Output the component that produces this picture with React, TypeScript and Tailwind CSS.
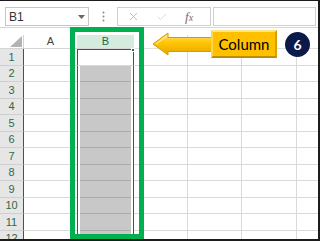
import { Check, X } from "lucide-react";

const rows = [1, 2, 3, 4, 5, 6, 7, 8, 9, 10, 11, 12];

function Row({ n }: { n: number }) {
  return (
    <div className="flex h-[16.5px] shrink-0">
      {/* row number */}
      <div className="w-[24px] shrink-0 bg-[#e6e6e6] border-r border-b border-r-[#1e6b40] border-b-[#cfcfcf] flex items-center justify-center text-[11px] text-[#2d6a47]">
        {n}
      </div>
      <div className="w-[53px] shrink-0 border-b border-[#dadada]" />
      {/* selected column B */}
      <div
        className={
          n === 1
            ? "w-[57px] shrink-0 border-x border-t border-[#1e6b40] border-b-[#dadada] border-b"
            : "w-[57px] shrink-0 border-x border-[#1e6b40] px-[2px]"
        }
      >
        {n !== 1 && <div className="h-full bg-[#c8c8c8] border-b border-[#a9a9a9]" />}
      </div>
      <div className="w-[54px] shrink-0 border-b border-r border-[#dadada]" />
      <div className="w-[54px] shrink-0 border-b border-r border-[#dadada]" />
      <div className="w-[55px] shrink-0 border-b border-r border-[#dadada]" />
      <div className="flex-1 border-b border-[#dadada]" />
    </div>
  );
}

export default function App() {
  return (
    <div className="relative w-[320px] h-[241px] overflow-hidden bg-white border-t border-r-2 border-b-2 border-[#1c1c1c] font-['Liberation_Sans',sans-serif] flex flex-col">
      {/* Formula bar */}
      <div className="flex h-[27px] shrink-0 items-start pt-[6px] border-b border-[#d6d6d6]">
        <div className="ml-[5px] w-[84px] h-[19px] border border-[#c6c6c6] flex items-center justify-between pl-[3px] pr-[3px]">
          <span className="text-[12px] text-[#333]">B1</span>
          <svg width="7" height="4" viewBox="0 0 7 4">
            <path d="M0 0 L7 0 L3.5 4 Z" fill="#666" />
          </svg>
        </div>
        <div className="w-[28px] h-[19px] flex items-center justify-center">
          <svg width="3" height="11" viewBox="0 0 3 11">
            <circle cx="1.5" cy="1.5" r="1" fill="#888" />
            <circle cx="1.5" cy="5.5" r="1" fill="#888" />
            <circle cx="1.5" cy="9.5" r="1" fill="#888" />
          </svg>
        </div>
        <div className="w-[94px] h-[19px] border border-[#d0d0d0] flex items-center">
          <X size={13} strokeWidth={1.3} className="ml-[9px] text-[#a6a6a6]" />
          <Check size={12} strokeWidth={1.3} className="ml-[16px] text-[#c2c2c2]" />
          <span className="ml-[17px] text-[13px] italic text-[#6f6f6f] font-['Liberation_Serif',serif]">
            f<span className="text-[10px]">x</span>
          </span>
        </div>
        <div className="ml-[2px] mr-[2px] flex-1 h-[19px] border border-[#d0d0d0]" />
      </div>

      <div className="h-[7px] shrink-0" />

      {/* Column headers */}
      <div className="flex h-[14px] shrink-0 text-[11px]">
        <div className="w-[24px] shrink-0 border-r border-b border-[#d4d4d4] flex items-end justify-end pr-[1px] pb-[1px]">
          <svg width="12" height="11" viewBox="0 0 12 11">
            <path d="M12 0 L12 11 L0 11 Z" fill="#b3b3b3" />
          </svg>
        </div>
        <div className="w-[53px] shrink-0 border-b border-[#d4d4d4] flex items-center justify-center text-[#444]">A</div>
        <div className="w-[57px] shrink-0 bg-[#d3ecdd] border-b border-[#d4d4d4] flex items-center justify-center text-[#1e6b40]">B</div>
        <div className="w-[54px] shrink-0 border-b border-r border-[#e0e0e0]" />
        <div className="w-[54px] shrink-0 border-b border-r border-[#e0e0e0]" />
        <div className="w-[55px] shrink-0 border-b border-r border-[#e0e0e0]" />
        <div className="flex-1 border-b border-[#e0e0e0]" />
      </div>

      {/* Rows */}
      <div className="flex flex-col">
        {rows.map((n) => (
          <Row key={n} n={n} />
        ))}
      </div>

      {/* fill handle */}
      <div className="absolute left-[131px] top-[47px] w-[4px] h-[4px] bg-[#1e6b40] border border-white" />

      {/* annotation: green frame */}
      <div className="absolute left-[70px] top-[26px] w-[74px] h-[212px] border-[5px] border-[#00b050]" />

      {/* annotation: arrow */}
      <svg className="absolute left-[150px] top-[29px]" width="66" height="28" viewBox="0 0 66 28">
        <defs>
          <linearGradient id="arrowFill" x1="0" y1="0" x2="0" y2="1">
            <stop offset="0" stopColor="#ffe17a" />
            <stop offset="0.45" stopColor="#ffc400" />
            <stop offset="1" stopColor="#e6a700" />
          </linearGradient>
        </defs>
        <path
          d="M3 14 L18 3 L18 7.5 L64 7.5 L64 21.5 L18 21.5 L18 25 Z"
          fill="url(#arrowFill)"
          stroke="#d99c00"
          strokeWidth="1"
        />
        <path d="M6 14 L17 6" stroke="#fff1b8" strokeWidth="1" />
      </svg>

      {/* annotation: label */}
      <div className="absolute left-[211px] top-[29px] w-[66px] h-[28px] bg-[#ffc000] border-2 border-t-[#ffe38a] border-l-[#ffd550] border-b-[#c08c00] border-r-[#d79f00] flex items-center justify-center">
        <span className="text-[15px] text-black font-['Lato',sans-serif] leading-none">Column</span>
      </div>

      {/* annotation: badge */}
      <div className="absolute left-[285px] top-[31px] w-[25px] h-[25px] rounded-full bg-[#0b1a4a] flex items-center justify-center">
        <span className="text-[14px] font-bold text-white font-['Lato',sans-serif] leading-none">6</span>
      </div>
    </div>
  );
}
